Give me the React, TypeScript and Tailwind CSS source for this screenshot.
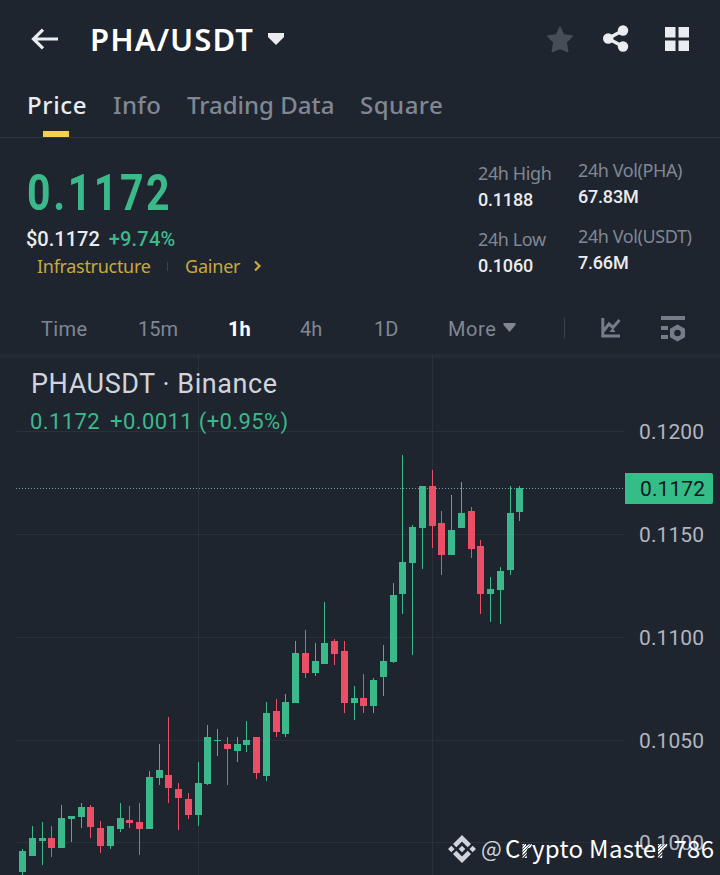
import { clsx } from "clsx";

type Candle = {
  x: number;
  high: number;
  top: number;
  bottom: number;
  low: number;
  up: boolean;
};

const up = (x: number, high: number, top: number, bottom: number, low: number): Candle => ({
  x, high, top, bottom, low, up: true,
});
const down = (x: number, high: number, top: number, bottom: number, low: number): Candle => ({
  x, high, top, bottom, low, up: false,
});

const candles: Candle[] = [
  up(22, 849, 851, 872, 875),
  up(32, 826, 838, 856, 856),
  up(42, 822, 838, 841, 865),
  down(51, 826, 838, 848, 857),
  up(61, 805, 818, 848, 848),
  up(71, 816, 816, 819, 842),
  up(81, 803, 807, 817, 828),
  down(90, 805, 807, 827, 838),
  down(100, 821, 828, 846, 853),
  up(110, 826, 826, 846, 849),
  up(120, 803, 818, 829, 832),
  down(129, 806, 820, 823, 828),
  down(139, 803, 822, 829, 855),
  up(149, 771, 777, 829, 829),
  up(159, 744, 770, 778, 785),
  down(168, 717, 775, 788, 803),
  down(178, 783, 789, 798, 830),
  down(188, 793, 799, 815, 819),
  up(198, 762, 783, 815, 826),
  up(207, 725, 737, 784, 785),
  up(217, 729, 740, 741, 756),
  down(227, 737, 744, 749, 785),
  up(237, 737, 744, 751, 762),
  up(246, 721, 740, 745, 752),
  down(256, 737, 737, 773, 779),
  up(266, 702, 713, 776, 781),
  down(276, 699, 711, 732, 737),
  up(285, 694, 702, 734, 737),
  up(295, 641, 653, 703, 703),
  down(305, 630, 653, 673, 678),
  up(315, 643, 661, 673, 676),
  up(324, 602, 643, 664, 664),
  down(334, 639, 641, 654, 665),
  down(344, 641, 651, 703, 713),
  up(354, 686, 698, 703, 720),
  down(363, 674, 698, 706, 713),
  up(373, 678, 680, 706, 713),
  up(383, 645, 661, 677, 696),
  up(393, 583, 595, 662, 663),
  up(402, 455, 562, 594, 614),
  up(412, 525, 527, 563, 655),
  up(422, 486, 486, 528, 569),
  down(432, 470, 486, 526, 548),
  down(441, 511, 523, 555, 575),
  up(451, 495, 530, 555, 555),
  up(461, 482, 513, 528, 528),
  down(471, 507, 511, 549, 558),
  down(480, 540, 546, 594, 614),
  up(490, 577, 589, 594, 622),
  up(500, 567, 571, 590, 624),
  up(510, 486, 513, 570, 575),
  up(519, 486, 488, 512, 521),
];

const priceLevels = [
  { label: "0.1200", y: 431 },
  { label: "0.1150", y: 534 },
  { label: "0.1100", y: 637 },
  { label: "0.1050", y: 740 },
  { label: "0.1000", y: 842 },
];

const tabs = [
  { name: "Price", className: "w-[86px] tracking-[0.7px]" },
  { name: "Info", className: "w-[74px] tracking-[0.4px]" },
  { name: "Trading Data", className: "w-[173px]" },
  { name: "Square", className: "w-[100px] tracking-[0.5px]" },
];

const Header = () => (
  <header className="flex h-[78px] items-center px-[31px]">
    <svg width="28" height="22" viewBox="0 0 28 22" className="shrink-0" fill="none">
      <path d="M12 1.600 2.500 11l9.500 9.400M3 11h24" stroke="#eaecef" strokeWidth="3.200" />
    </svg>
    <h1 className="ml-[31px] w-[164px] whitespace-nowrap font-['Noto_Sans'] text-[31px] font-semibold tracking-[1.1px] text-white">
      PHA/USDT
    </h1>
    <svg width="18" height="14" viewBox="0 0 18 14" className="ml-[13px] shrink-0">
      <path d="M1 1h16v4L9 13 1 5z" fill="#eaecef" />
    </svg>
    <div className="ml-auto flex items-center gap-[29px]">
      <svg width="28" height="28" viewBox="0 0 28 28" className="mr-px">
        <path
          d="M14 2l3.500 8 8.700 1.100-6.100 6.100 1.600 9.300-7.700-3.100-7.700 3.100 1.600-9.300-6.100-6.100 8.700-1.100z"
          fill="#474d57"
          stroke="#474d57"
          strokeWidth="1.500"
          strokeLinejoin="round"
        />
      </svg>
      <svg width="28" height="28" viewBox="0 0 28 28" fill="#eaecef" className="-ml-0.5">
        <path d="M21 5.500 6 13.500l15 8" fill="none" stroke="#eaecef" strokeWidth="3.500" />
        <circle cx="21" cy="5.500" r="5.200" />
        <circle cx="6.200" cy="13.500" r="5.200" />
        <circle cx="21" cy="21.500" r="5.200" />
      </svg>
      <svg width="24" height="24" viewBox="0 0 24 24" fill="#eaecef" className="ml-[6px]">
        <path d="M0 0h10.500v10.500H0zM13.500 0H24v10.500H13.500zM0 13.500h10.500V24H0zM13.500 13.500H24V24H13.500z" />
      </svg>
    </div>
  </header>
);

const Tabs = () => (
  <nav className="flex h-[60px] border-b border-[#2f3640] pl-[27px] font-['Noto_Sans'] text-2xl">
    {tabs.map(({ name, className }, i) => (
      <div
        key={name}
        className={clsx(
          "flex flex-col justify-between whitespace-nowrap pt-[11px] font-medium",
          className,
          i === 0 ? "text-[#eaecef]" : "text-[#808793]",
        )}
      >
        <span>{name}</span>
        {i === 0 && <div className="ml-4 h-[6px] w-[26px] bg-[#f5d04c]" />}
      </div>
    ))}
  </nav>
);

const Stat = ({ label, value }: { label: string; value: string }) => (
  <div className="h-[66px] whitespace-nowrap">
    <p className="font-['Noto_Sans'] text-[18px] leading-[26px] tracking-[-0.4px] text-[#808793]">
      {label}
    </p>
    <p className="mt-px font-['Roboto'] text-[18px] font-medium leading-[26px] tracking-[-0.2px] text-[#eaecef]">
      {value}
    </p>
  </div>
);

const Summary = () => (
  <section className="flex h-[164px]">
    <div className="w-[478px] whitespace-nowrap pl-[27px] pt-[30px] font-['Roboto']">
      <p className="w-fit origin-left scale-x-[0.82] text-[50px] font-bold leading-[50px] tracking-[3.200px] text-[#3cb98a]">
        0.1172
      </p>
      <p className="-ml-px mt-[8px] text-xl font-medium leading-[26px] text-[#eaecef]">
        $0.1172 <span className="ml-1 tracking-[0.2px] text-[#3cb98a]">+9.74%</span>
      </p>
      <div className="flex items-center pl-[10px] font-['Noto_Sans'] text-[18px] leading-7 text-[#c9a83f]">
        <span className="w-[130px] tracking-[-0.3px]">Infrastructure</span>
        <span className="mr-[17px] h-[9px] w-px bg-[#3b424d]" />
        <span className="w-[55px] tracking-[-0.2px]">Gainer</span>
        <svg width="9" height="12" viewBox="0 0 9 12" className="ml-[13px]" fill="none">
          <path d="m2 1.500 4.500 4.500L2 10.500" stroke="#c9a83f" strokeWidth="2.200" />
        </svg>
      </div>
    </div>
    <div className="w-[100px] pt-[22px]">
      <Stat label="24h High" value="0.1188" />
      <Stat label="24h Low" value="0.1060" />
    </div>
    <div className="pt-[19px]">
      <Stat label="24h Vol(PHA)" value="67.83M" />
      <Stat label="24h Vol(USDT)" value="7.66M" />
    </div>
  </section>
);

const Intervals = () => (
  <div className="flex h-[56px] items-center border-b-4 border-[#252b34] pl-[41px] pt-px font-['Roboto'] text-[20px] text-[#808793]">
    <span className="w-[97px] tracking-[0.4px]">Time</span>
    <span className="w-[90px]">15m</span>
    <span className="w-[72px] font-bold text-white">1h</span>
    <span className="w-[74px]">4h</span>
    <span className="w-[74px]">1D</span>
    <span className="w-[55px] tracking-[0.6px]">More</span>
    <svg width="13" height="9" viewBox="0 0 13 9" className="mb-0.5">
      <path d="M.5 0h12v2l-6 7-6-7z" fill="#808793" />
    </svg>
    <div className="mb-0.5 ml-[48px] h-5 w-px bg-[#3b424d]" />
    <svg width="20" height="20" viewBox="0 0 20 20" className="mb-0.5 ml-9" fill="none">
      <path d="M1.800 0v18H19M2.500 13 8 6l4 3.500L18.500 2" stroke="#767d89" strokeWidth="3" />
      <path d="M11.500 10 8.500 14h6z" fill="#767d89" />
    </svg>
    <svg width="26" height="27" viewBox="0 0 26 27" className="ml-[39px]" fill="#767d89">
      <path d="M1 1h24v4H1zM1 11h7v4H1zM1 20h7v4H1z" />
      <path d="m17.500 9.500 7.500 4.200v8.600l-7.500 4.200-7.500-4.200v-8.600zm0 5.200a3.300 3.300 0 1 0 0 6.600 3.300 3.300 0 0 0 0-6.600z" fillRule="evenodd" />
    </svg>
  </div>
);

// letter with a hatched fill, as in the watermark
const HatchedR = () => (
  <span className="bg-[repeating-linear-gradient(135deg,#fff_0_1.4px,#5a606a_1.4px_2.2px)] bg-clip-text font-black text-transparent">
    r
  </span>
);

const Chart = () => (
  <section className="relative h-[517px] font-['Roboto']">
    <svg width="720" height="517" viewBox="0 358 720 517" className="block overflow-visible">
      <g fill="#2a313b">
        <rect x="198" y="354" width="1" height="521" />
        <rect x="432" y="354" width="1" height="521" />
        {priceLevels.map(({ y }) => (
          <rect key={y} x="16" y={y} width="608" height="1" />
        ))}
      </g>
      <path d="M16 488.500H625" stroke="#6fa497" strokeDasharray="1 2" />
      {candles.map((c) => (
        <g key={c.x} fill={c.up ? "#3cb98a" : "#ec4e65"}>
          <rect x={c.x} y={c.high} width="1" height={c.low - c.high} />
          <rect x={c.x - 3} y={c.top} width="7" height={c.bottom - c.top} />
        </g>
      ))}
      {priceLevels.map(({ label, y }) => (
        <text key={label} x="639" y={y + 8} fontSize="21" fill="#b2b5be" textLength="65">
          {label}
        </text>
      ))}
      <path d="M625 473h86a2 2 0 0 1 2 2v27a2 2 0 0 1-2 2h-86z" fill="#35bd88" />
      <text x="640" y="496" fontSize="21" fill="#131722" textLength="65">
        0.1172
      </text>
    </svg>
    <div className="absolute left-[31px] top-[10px] whitespace-nowrap">
      <p className="text-[27px] leading-8 tracking-[0.55px] text-[#d1d4dc]">PHAUSDT · Binance</p>
      <p className="-ml-px mt-2 text-[22px] leading-7 tracking-[0.4px] text-[#3cb98a]">
        0.1172<span className="ml-[10px]">+0.0011 (+0.95%)</span>
      </p>
    </div>
    <div className="absolute bottom-[6px] left-[448px] flex items-center whitespace-nowrap font-['Noto_Sans_CJK_SC'] text-2xl leading-9 text-white">
      <svg width="28" height="28" viewBox="0 0 28 28" fill="#d0d3da">
        <path d="m14 0 9 9-3.300 3.300L14 6.600l-5.700 5.700L5 9zM14 28l-9-9 3.300-3.300 5.700 5.700 5.700-5.700L23 19zM3.300 10.700 6.600 14l-3.300 3.300L0 14zM24.700 10.700 28 14l-3.300 3.300-3.300-3.300zM14 10.700l3.300 3.300-3.300 3.300-3.300-3.300z" />
      </svg>
      <span className="mb-1 ml-[5px] w-[24px] text-[22px] text-[#d0d3da]">@</span>
      <span className="mb-0.5 tracking-[0.3px]">
        C<HatchedR />
        ypto Maste
        <HatchedR /> 786
      </span>
    </div>
  </section>
);

const App = () => (
  <main className="h-[875px] w-[720px] overflow-hidden bg-[#1f252f]">
    <Header />
    <Tabs />
    <Summary />
    <Intervals />
    <Chart />
  </main>
);

export default App;
